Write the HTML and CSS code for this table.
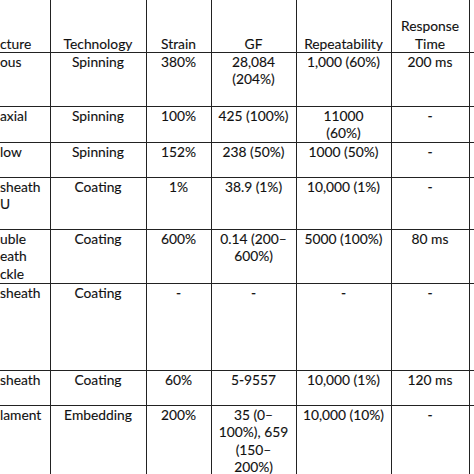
FILE: index.html
```html
<!DOCTYPE html>
<html>
<head>
<meta charset="utf-8">
<link rel="stylesheet" href="styles.css">
</head>
<body>
<div class="frame">
<table class="grid">
  <colgroup>
    <col class="c0"><col class="c1"><col class="c2"><col class="c3"><col class="c4"><col class="c5"><col class="c6">
  </colgroup>
  <tr class="head">
    <th class="first">cture</th><th>Technology</th><th>Strain</th><th>GF</th><th>Repeatability</th><th>Response<br>Time</th><th></th>
  </tr>
  <tr class="r54">
    <td class="first">ous</td><td>Spinning</td><td>380%</td><td>28,084<br>(204%)</td><td>1,000 (60%)</td><td>200 ms</td><td></td>
  </tr>
  <tr class="r35">
    <td class="first">axial</td><td>Spinning</td><td>100%</td><td>425 (100%)</td><td>11000<br>(60%)</td><td>-</td><td></td>
  </tr>
  <tr class="r35">
    <td class="first">low</td><td>Spinning</td><td>152%</td><td>238 (50%)</td><td>1000 (50%)</td><td>-</td><td></td>
  </tr>
  <tr class="r52">
    <td class="first">sheath<br>U</td><td>Coating</td><td>1%</td><td>38.9 (1%)</td><td>10,000 (1%)</td><td>-</td><td></td>
  </tr>
  <tr class="r54">
    <td class="first">uble<br>eath<br>ckle</td><td>Coating</td><td>600%</td><td>0.14 (200–<br>600%)</td><td>5000 (100%)</td><td>80 ms</td><td></td>
  </tr>
  <tr class="r87">
    <td class="first">sheath</td><td>Coating</td><td>-</td><td>-</td><td>-</td><td>-</td><td></td>
  </tr>
  <tr class="r35">
    <td class="first">sheath</td><td>Coating</td><td>60%</td><td>5-9557</td><td>10,000 (1%)</td><td>120 ms</td><td></td>
  </tr>
  <tr class="r80">
    <td class="first">lament</td><td>Embedding</td><td>200%</td><td>35 (0–<br>100%), 659<br>(150–<br>200%)</td><td>10,000 (10%)</td><td>-</td><td></td>
  </tr>
</table>
</div>
</body>
</html>
```

FILE: styles.css
```css
html, body {
  margin: 0;
  padding: 0;
  background: #ffffff;
}
.frame {
  width: 474px;
  height: 474px;
  overflow: hidden;
}
.grid {
  border-collapse: collapse;
  table-layout: fixed;
  width: 481px;
  margin-top: -1px;
  font-family: "Lato", "Open Sans", sans-serif;
  font-size: 13.8px;
  line-height: 17.4px;
  color: #111111;
  -webkit-text-stroke: 0.12px #111111;
}
.c0 { width: 50px; }
.c1 { width: 96px; }
.c2 { width: 65px; }
.c3 { width: 85px; }
.c4 { width: 95px; }
.c5 { width: 78px; }
.c6 { width: 12px; }
.grid th, .grid td {
  border: 1px solid #222222;
  padding: 0 2px;
  text-align: center;
  vertical-align: top;
  font-weight: normal;
  overflow: hidden;
  white-space: nowrap;
}
.grid th {
  vertical-align: bottom;
  padding-bottom: 0;
}
.grid .first {
  text-align: left;
  border-left: none;
  padding-left: 0;
}
.head { height: 53px; }
.r35 { height: 35px; }
.r52 { height: 52px; }
.r54 { height: 54px; }
.r87 { height: 87px; }
.r80 { height: 80px; }
```
